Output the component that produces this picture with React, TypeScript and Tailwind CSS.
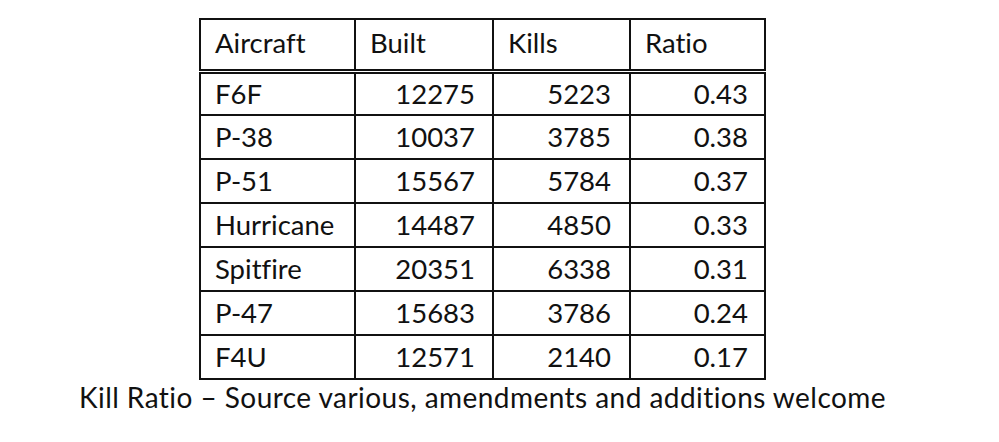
const rows = [
  { name: "F6F", built: "12275", kills: "5223", ratio: "0.43" },
  { name: "P-38", built: "10037", kills: "3785", ratio: "0.38" },
  { name: "P-51", built: "15567", kills: "5784", ratio: "0.37" },
  { name: "Hurricane", built: "14487", kills: "4850", ratio: "0.33" },
  { name: "Spitfire", built: "20351", kills: "6338", ratio: "0.31" },
  { name: "P-47", built: "15683", kills: "3786", ratio: "0.24" },
  { name: "F4U", built: "12571", kills: "2140", ratio: "0.17" },
];

export default function App() {
  return (
    <div
      className="w-[999px] h-[442px] bg-white text-[#111] overflow-hidden [font-variant-ligatures:none]"
      style={{ fontFamily: "Lato, 'Open Sans', sans-serif" }}
    >
      <div className="w-[965px] flex flex-col items-center pt-[18px]">
        <table className="border-collapse border-2 border-[#111] text-[27.5px] leading-none">
          <thead>
            <tr className="h-[52px]">
              <th className="w-[155px] border-2 border-b-[5px] [border-bottom-style:double] border-[#111] pl-[14px] pb-[3px] text-left font-normal">Aircraft</th>
              <th className="w-[138px] border-2 border-b-[5px] [border-bottom-style:double] border-[#111] pl-[14px] pb-[3px] text-left font-normal">Built</th>
              <th className="w-[137px] border-2 border-b-[5px] [border-bottom-style:double] border-[#111] pl-[14px] pb-[3px] text-left font-normal">Kills</th>
              <th className="w-[135px] border-2 border-b-[5px] [border-bottom-style:double] border-[#111] pl-[14px] pb-[3px] text-left font-normal">Ratio</th>
            </tr>
          </thead>
          <tbody>
            {rows.map((r) => (
              <tr key={r.name} className="h-[44px]">
                <td className="border-2 border-[#111] pl-[14px] text-left">{r.name}</td>
                <td className="border-2 border-[#111] pr-[17px] text-right">{r.built}</td>
                <td className="border-2 border-[#111] pr-[18px] text-right">{r.kills}</td>
                <td className="border-2 border-[#111] pr-[16px] text-right">{r.ratio}</td>
              </tr>
            ))}
          </tbody>
        </table>
        <p className="text-[28px] tracking-[0.45px] leading-none mt-[3px]">
          Kill Ratio – Source various, amendments and additions welcome
        </p>
      </div>
    </div>
  );
}
